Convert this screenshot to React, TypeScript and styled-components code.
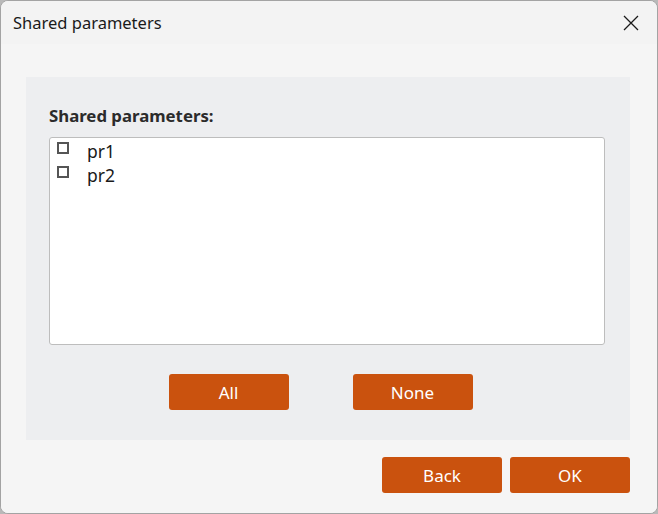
import React, { useState } from "react";
import styled, { createGlobalStyle } from "styled-components";

const GlobalStyle = createGlobalStyle`
  html, body {
    margin: 0;
    padding: 0;
    background: #b9b9b9;
  }
  body {
    font-family: "Noto Sans", "Open Sans", sans-serif;
  }
`;

type item = { name: string; checked: boolean };

const App = () => {
  const [params, setParams] = useState<item[]>([
    { name: "pr1", checked: false },
    { name: "pr2", checked: false },
  ]);

  const setAll = (value: boolean) => {
    setParams(params.map((p) => ({ ...p, checked: value })));
  };

  const toggle = (idx: number) => {
    setParams(params.map((p, i) => (i === idx ? { ...p, checked: !p.checked } : p)));
  };

  return (
    <>
      <GlobalStyle />
      <Window>
        <TitleBar>
          <Title>Shared parameters</Title>
          <CloseButton aria-label="Close">
            <svg width="16" height="16" viewBox="0 0 16 16">
              <path d="M1 1 L15 15 M15 1 L1 15" stroke="#1a1a1a" strokeWidth="1.3" />
            </svg>
          </CloseButton>
        </TitleBar>
        <Body>
          <Panel>
            <Label>Shared parameters:</Label>
            <ListBox>
              {params.map((p, id) => (
                <Row key={id} onClick={() => toggle(id)}>
                  <Check $checked={p.checked} />
                  <RowText>{p.name}</RowText>
                </Row>
              ))}
            </ListBox>
            <PanelButtons>
              <OrangeButton onClick={() => setAll(true)}>All</OrangeButton>
              <OrangeButton onClick={() => setAll(false)}>None</OrangeButton>
            </PanelButtons>
          </Panel>
          <Footer>
            <OrangeButton>Back</OrangeButton>
            <OrangeButton>OK</OrangeButton>
          </Footer>
        </Body>
      </Window>
    </>
  );
};

export default App;

const Window = styled.div`
  box-sizing: border-box;
  width: 658px;
  height: 514px;
  border: 1px solid #a3a3a3;
  border-radius: 8px;
  background: #f3f3f3;
  overflow: hidden;
  display: flex;
  flex-direction: column;
`;

const TitleBar = styled.div`
  height: 43px;
  display: flex;
  align-items: center;
  justify-content: space-between;
  padding: 0 18px 0 12px;
  background: #f3f3f3;
`;

const Title = styled.div`
  font-size: 16.5px;
  color: #1a1a1a;
  margin-top: -1px;
`;

const CloseButton = styled.button`
  border: none;
  background: transparent;
  padding: 0;
  width: 16px;
  height: 16px;
  display: flex;
  cursor: pointer;
`;

const Body = styled.div`
  flex: 1;
  background: #f5f5f5;
  padding: 33px 27px 0 25px;
  display: flex;
  flex-direction: column;
`;

const Panel = styled.div`
  background: #edeef0;
  height: 363px;
  box-sizing: border-box;
  padding: 26px 25px 0 23px;
  display: flex;
  flex-direction: column;
`;

const Label = styled.div`
  font-size: 16.8px;
  font-weight: bold;
  color: #2b2b2b;
  height: 22px;
  line-height: 22px;
  margin-top: 2px;
  margin-bottom: 10px;
`;

const ListBox = styled.div`
  box-sizing: border-box;
  height: 208px;
  background: #ffffff;
  border: 1px solid #bdbdbd;
  border-radius: 3px;
  padding: 1px 0 0 7px;
`;

const Row = styled.div`
  display: flex;
  align-items: center;
  height: 24px;
  cursor: pointer;
`;

const Check = styled.span<{ $checked: boolean }>`
  box-sizing: border-box;
  width: 12px;
  height: 12px;
  border: 2px solid #555555;
  background: ${(p) => (p.$checked ? "#555555" : "#ffffff")};
  margin-top: -7px;
`;

const RowText = styled.span`
  font-size: 17.5px;
  color: #1a1a1a;
  margin-left: 18px;
`;

const PanelButtons = styled.div`
  display: flex;
  justify-content: center;
  gap: 64px;
  margin-top: 29px;
  padding-right: 13px;
`;

const OrangeButton = styled.button`
  width: 120px;
  height: 36px;
  border: none;
  border-radius: 3px;
  background: #ca520e;
  color: #ffffff;
  font-family: "Noto Sans", "Open Sans", sans-serif;
  font-size: 17px;
  cursor: pointer;
  padding: 0;
`;

const Footer = styled.div`
  display: flex;
  justify-content: flex-end;
  gap: 8px;
  margin-top: 17px;
`;
